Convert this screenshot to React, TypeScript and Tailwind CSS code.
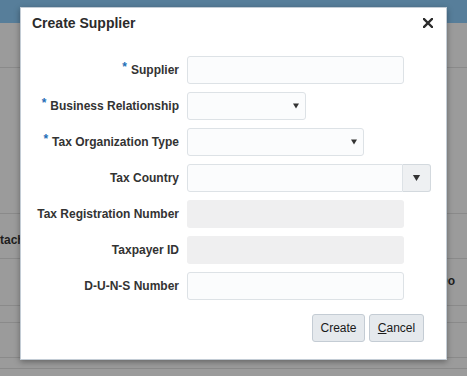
import React from 'react'

const font = { fontFamily: '"Liberation Sans", Arial, sans-serif' }

type Row = {
    label: string
    required?: boolean
    kind: 'text' | 'select' | 'combo' | 'disabled'
    width: string
}

const rows: Row[] = [
    { label: 'Supplier', required: true, kind: 'text', width: 'w-[217px]' },
    { label: 'Business Relationship', required: true, kind: 'select', width: 'w-[119px]' },
    { label: 'Tax Organization Type', required: true, kind: 'select', width: 'w-[177px]' },
    { label: 'Tax Country', kind: 'combo', width: 'w-[244px]' },
    { label: 'Tax Registration Number', kind: 'disabled', width: 'w-[217px]' },
    { label: 'Taxpayer ID', kind: 'disabled', width: 'w-[217px]' },
    { label: 'D-U-N-S Number', kind: 'text', width: 'w-[217px]' },
]

function Arrow({ className }: { className?: string }) {
    return (
        <svg viewBox="0 0 6 5" className={className}>
            <path d="M0 0 H6 L3 5 Z" fill="#333" />
        </svg>
    )
}

function Field({ row }: { row: Row }) {
    if (row.kind === 'disabled') {
        return <div className={`${row.width} h-[28px] rounded-[3px] bg-[#efeff0]`} />
    }
    if (row.kind === 'combo') {
        return (
            <div className={`${row.width} h-[28px] flex`}>
                <div className="flex-1 rounded-l-[3px] border border-[#dde2e6] bg-[#fbfcfd]" />
                <div className="w-[28px] rounded-r-[3px] border border-l-0 border-[#d3d9de] bg-[#eef0f2] flex items-center justify-center">
                    <Arrow className="w-[9px] h-[6px]" />
                </div>
            </div>
        )
    }
    return (
        <div className={`${row.width} h-[28px] rounded-[3px] border border-[#dde2e6] bg-[#fbfcfd] flex items-center justify-end pr-[6px]`}>
            {row.kind === 'select' && <Arrow className="w-[6px] h-[6px]" />}
        </div>
    )
}

export default function App() {
    return (
        <div className="relative w-[467px] h-[376px] overflow-hidden bg-[#9b9b9b]" style={font}>
            {/* page behind the overlay */}
            <div className="h-[23px] bg-[#577e9a]" />
            <div className="h-[45px] border-b border-[#8a8a8a]" />
            <div className="h-[146px] border-b border-[#8a8a8a]" />
            <div className="h-[45px] border-b border-[#8a8a8a] flex items-end pb-[9px]">
                <span className="text-[12px] font-bold text-[#1e1e1e]">tach</span>
            </div>
            <div className="h-[47px] border-b border-[#8a8a8a] flex items-center justify-end pb-[2px]">
                <span className="text-[12px] font-bold text-[#1e1e1e] mr-[12px]">Do</span>
            </div>
            <div className="h-[17px] border-b border-[#8a8a8a]" />
            <div className="h-[35px] border-b border-[#8a8a8a]" />
            <div className="h-[11px] border-b border-[#8a8a8a]" />

            {/* dialog */}
            <div className="absolute left-[20px] top-[7px] w-[427px] h-[353px] bg-white border border-[#c3ccd5] shadow-[0_2px_6px_rgba(0,0,0,0.35)]">
                <div className="h-[30px] flex items-center justify-between pl-[11px] pr-[13px]">
                    <span className="text-[14px] font-bold text-[#2b2b2b]">Create Supplier</span>
                    <svg viewBox="0 0 10 10" className="w-[10px] h-[10px]">
                        <path d="M1 1 L9 9 M9 1 L1 9" stroke="#2b2b2b" strokeWidth="2.4" strokeLinecap="square" />
                    </svg>
                </div>

                <div className="mt-[18px] flex flex-col gap-[8px]">
                    {rows.map((row) => (
                        <div key={row.label} className="flex items-center">
                            <div className="w-[158px] text-right text-[12px] font-bold text-[#333]">
                                {row.required && <span className="text-[#1f6fb7] align-top mr-[4px] relative -top-[3px]">*</span>}
                                {row.label}
                            </div>
                            <div className="ml-[8px]">
                                <Field row={row} />
                            </div>
                        </div>
                    ))}
                </div>

                <div className="mt-[14px] flex justify-end gap-[4px] pr-[22px]">
                    <button className="w-[53px] h-[28px] rounded-[3px] border border-[#c4ccd4] bg-[#e5e9ed] text-[12px] text-[#1a1a1a]">
                        Create
                    </button>
                    <button className="w-[55px] h-[28px] rounded-[3px] border border-[#c4ccd4] bg-[#e5e9ed] text-[12px] text-[#1a1a1a]">
                        <span className="underline">C</span>ancel
                    </button>
                </div>
            </div>
        </div>
    )
}
